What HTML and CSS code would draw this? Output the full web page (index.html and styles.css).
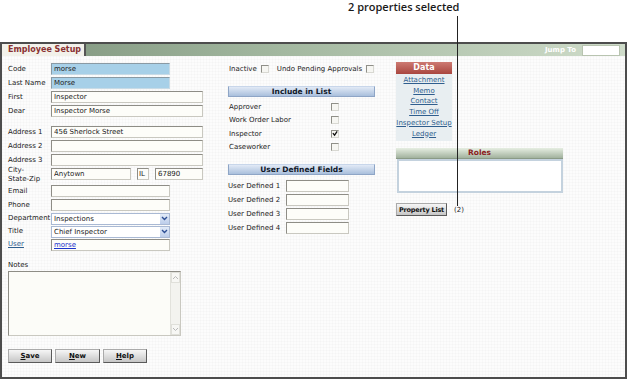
FILE: index.html
```html
<!DOCTYPE html>
<html lang="en">
<head>
  <meta charset="UTF-8" />
  <title>Employee Setup</title>
  <link rel="stylesheet" href="styles.css">
</head>
<body>
  <!-- Callout above the screen -->
  <div class="callout">
    <span class="callout-text">2 properties selected</span>
    <span class="callout-line"></span>
  </div>

  <div class="frame">
    <!-- Title bar -->
    <div class="titlebar">
      <div class="tab">Employee Setup</div>
      <div class="jump">
        <span>Jump To</span>
        <input type="text" class="jump-input">
      </div>
    </div>

    <div class="content">
      <!-- Left column -->
      <div class="col-left">
        <div class="row"><span class="lbl">Code</span><input class="fld short hl" value="morse"></div>
        <div class="row"><span class="lbl">Last Name</span><input class="fld short hl" value="Morse"></div>
        <div class="row"><span class="lbl">First</span><input class="fld long" value="Inspector"></div>
        <div class="row"><span class="lbl">Dear</span><input class="fld long" value="Inspector Morse"></div>

        <div class="row gap-top"><span class="lbl">Address 1</span><input class="fld long" value="456 Sherlock Street"></div>
        <div class="row"><span class="lbl">Address 2</span><input class="fld long" value=""></div>
        <div class="row"><span class="lbl">Address 3</span><input class="fld long" value=""></div>
        <div class="row city-row">
          <span class="lbl two-line">City-<br>State-Zip</span>
          <input class="fld city" value="Anytown">
          <input class="fld state" value="IL">
          <input class="fld zip" value="67890">
        </div>
        <div class="row"><span class="lbl">Email</span><input class="fld short" value=""></div>
        <div class="row"><span class="lbl">Phone</span><input class="fld short" value=""></div>
        <div class="row tight"><span class="lbl">Department</span>
          <div class="select"><span>Inspections</span><span class="arrow"><svg width="7" height="5" viewBox="0 0 7 5"><polyline points="1,1 3.5,3.5 6,1" fill="none" stroke="#2d4f94" stroke-width="1.4"/></svg></span></div>
        </div>
        <div class="row tight"><span class="lbl">Title</span>
          <div class="select"><span>Chief Inspector</span><span class="arrow"><svg width="7" height="5" viewBox="0 0 7 5"><polyline points="1,1 3.5,3.5 6,1" fill="none" stroke="#2d4f94" stroke-width="1.4"/></svg></span></div>
        </div>
        <div class="row tight"><a class="lbl link" href="#">User</a>
          <div class="fld short userbox"><a href="#">morse</a></div>
        </div>

        <div class="notes-lbl">Notes</div>
        <div class="notes">
          <div class="scroll">
            <span class="sbtn"><svg width="7" height="5" viewBox="0 0 7 5"><polyline points="1,4 3.5,1.5 6,4" fill="none" stroke="#b8b8b8" stroke-width="1"/></svg></span>
            <span class="sbtn"><svg width="7" height="5" viewBox="0 0 7 5"><polyline points="1,1 3.5,3.5 6,1" fill="none" stroke="#b8b8b8" stroke-width="1"/></svg></span>
          </div>
        </div>

        <div class="buttons">
          <button class="btn"><u>S</u>ave</button>
          <button class="btn"><u>N</u>ew</button>
          <button class="btn"><u>H</u>elp</button>
        </div>
      </div>

      <!-- Middle column -->
      <div class="col-mid">
        <div class="row">
          <span class="plain">Inactive</span><span class="chk"></span>
          <span class="plain undo">Undo Pending Approvals</span><span class="chk"></span>
        </div>

        <div class="bar blue first-bar">Include in List</div>
        <div class="list">
          <div class="crow"><span class="clbl">Approver</span><span class="chk"></span></div>
          <div class="crow"><span class="clbl">Work Order Labor</span><span class="chk"></span></div>
          <div class="crow"><span class="clbl">Inspector</span><span class="chk"><svg width="7" height="7" viewBox="0 0 7 7"><polyline points="1,3 3,5.5 6,1" fill="none" stroke="#111" stroke-width="1.5"/></svg></span></div>
          <div class="crow"><span class="clbl">Caseworker</span><span class="chk"></span></div>
        </div>

        <div class="bar blue">User Defined Fields</div>
        <div class="udf">
          <div class="row"><span class="ulbl">User Defined 1</span><input class="fld ufld" value=""></div>
          <div class="row"><span class="ulbl">User Defined 2</span><input class="fld ufld" value=""></div>
          <div class="row"><span class="ulbl">User Defined 3</span><input class="fld ufld" value=""></div>
          <div class="row"><span class="ulbl">User Defined 4</span><input class="fld ufld" value=""></div>
        </div>
      </div>

      <!-- Right column -->
      <div class="col-right">
        <div class="databox">
          <div class="data-head">Data</div>
          <div class="data-links">
            <a href="#">Attachment</a>
            <a href="#">Memo</a>
            <a href="#">Contact</a>
            <a href="#">Time Off</a>
            <a href="#">Inspector Setup</a>
            <a href="#">Ledger</a>
          </div>
        </div>

        <div class="bar green">Roles</div>
        <div class="roles"></div>

        <div class="prop-row">
          <button class="btn prop">Property List</button>
          <span class="count">(2)</span>
        </div>
      </div>
    </div>
  </div>
</body>
</html>
```

FILE: styles.css
```css
/* Global */
body {
  margin: 0;
  background: #fff;
  font-family: "DejaVu Sans", Verdana, sans-serif;
  font-size: 7px;
  color: #222;
  position: relative;
}
a {
  color: #2f5e8e;
}

/* Callout */
.callout {
  height: 42px;
  padding-left: 348px;
  box-sizing: border-box;
}
.callout-text {
  display: inline-block;
  font-family: "Open Sans", sans-serif;
  font-weight: 600;
  font-size: 11px;
  line-height: 14px;
  color: #1a1a1a;
}
.callout-line {
  position: absolute;
  left: 457px;
  top: 16px;
  width: 1px;
  height: 190px;
  background: #222;
  z-index: 10;
}

/* Frame */
.frame {
  width: 627px;
  height: 337px;
  box-sizing: border-box;
  border: 2px solid #4d4d4d;
  background-color: #fcfcfc;
  background-image:
    linear-gradient(90deg, rgba(0,0,0,0.016) 1px, transparent 1px),
    linear-gradient(rgba(0,0,0,0.016) 1px, transparent 1px);
  background-size: 3px 3px;
}
.titlebar {
  height: 12px;
  display: flex;
  justify-content: space-between;
  background: linear-gradient(90deg, #7d937c, #a3b8a0 45%, #cfdcca);
}
.tab {
  width: 84px;
  height: 12px;
  box-sizing: border-box;
  padding-left: 6px;
  background: #f2f1ea;
  border-right: 2px solid #555;
  color: #8a3232;
  font-weight: bold;
  font-size: 8px;
  line-height: 12px;
  white-space: nowrap;
  overflow: hidden;
}
.jump {
  display: flex;
  align-items: center;
  gap: 6px;
  padding-right: 5px;
  color: #fff;
  font-weight: bold;
  font-size: 7px;
}
.jump-input {
  width: 38px;
  height: 11px;
  box-sizing: border-box;
  border: 1px solid #b8c4b0;
  background: #fff;
  padding: 0;
}

/* Content columns */
.content {
  display: flex;
  padding: 6px 0 0 6px;
}
.col-left {
  width: 195px;
  margin-right: 25px;
}
.col-mid {
  width: 147px;
  margin-right: 21px;
}
.col-right {
  width: 167px;
}

/* Rows and fields */
.row {
  display: flex;
  align-items: center;
  height: 14px;
}
.row.tight {
  height: 13px;
}
.row.gap-top {
  margin-top: 7px;
}
.lbl {
  width: 43px;
  flex-shrink: 0;
  white-space: nowrap;
  line-height: 9px;
}
.fld {
  height: 12px;
  box-sizing: border-box;
  border: 1px solid #c9c8c0;
  border-top-color: #8e8d86;
  border-left-color: #8e8d86;
  background: #fdfdf9;
  padding: 0 2px;
  font-family: "DejaVu Sans", Verdana, sans-serif;
  font-size: 7px;
  color: #222;
  margin: 0;
}
.fld.short { width: 119px; }
.fld.long { width: 152px; }
.fld.hl { background: #a7d0e8; border-color: #c8dbe6; border-top-color: #8a9aa4; border-left-color: #8a9aa4; }
.city-row {
  height: 17px;
  align-items: flex-start;
}
.two-line {
  margin-top: -1px;
}
.fld.city { width: 80px; margin-top: 1px; }
.fld.state { width: 12px; margin: 1px 0 0 6px; padding: 0 1px; }
.fld.zip { width: 48px; margin: 1px 0 0 6px; }
.link {
  text-decoration: underline;
}

.select {
  width: 119px;
  height: 12px;
  box-sizing: border-box;
  border: 1px solid #a9b9d4;
  background: #fff;
  display: flex;
  align-items: center;
  justify-content: space-between;
  padding-left: 2px;
  font-size: 7px;
}
.select .arrow {
  width: 9px;
  height: 10px;
  background: linear-gradient(#e2ebf8, #bccdea);
  display: flex;
  align-items: center;
  justify-content: center;
}
.userbox {
  display: flex;
  align-items: center;
  background: #fdfdf9;
}
.userbox a {
  color: #1a33cc;
}

/* Notes */
.notes-lbl {
  margin-top: 10px;
  line-height: 9px;
}
.notes {
  margin-top: 1px;
  width: 173px;
  height: 65px;
  box-sizing: border-box;
  border: 1px solid #c9c8c0;
  border-top-color: #8e8d86;
  border-left-color: #8e8d86;
  background: #fcfcf8;
  display: flex;
  justify-content: flex-end;
}
.scroll {
  width: 9px;
  background: #f3f3ef;
  border-left: 1px solid #e2e2dc;
  display: flex;
  flex-direction: column;
  justify-content: space-between;
}
.sbtn {
  height: 9px;
  display: flex;
  align-items: center;
  justify-content: center;
  background: #f7f7f4;
  border: 1px solid #e0e0da;
}

/* Buttons */
.buttons {
  display: flex;
  gap: 3px;
  margin-top: 13px;
}
.btn {
  width: 44px;
  height: 14px;
  padding: 0;
  border: 1px solid #5a5a5a;
  border-top-color: #aaa;
  border-left-color: #aaa;
  background: linear-gradient(#f6f6f6, #c6c6c6);
  font-family: "DejaVu Sans", Verdana, sans-serif;
  font-weight: bold;
  font-size: 7px;
  color: #111;
  white-space: nowrap;
}
.buttons .btn:nth-child(2) { width: 45px; }

/* Middle column */
.plain {
  margin-left: 1px;
}
.undo {
  margin-left: 8px;
}
.chk {
  width: 8px;
  height: 8px;
  box-sizing: border-box;
  border: 1px solid #d8d8d2;
  border-top-color: #8f8f88;
  border-left-color: #8f8f88;
  background: #f6f6f2;
  margin-left: 4px;
  display: flex;
  align-items: center;
  justify-content: center;
}
.bar {
  height: 11px;
  box-sizing: border-box;
  text-align: center;
  font-weight: bold;
  font-size: 7.5px;
  line-height: 10px;
}
.bar.blue {
  background: linear-gradient(#e2eaf6, #a9bfdc);
  border: 1px solid #8ea5c6;
  border-top-color: #c8d6ea;
  color: #101828;
}
.first-bar {
  margin-top: 10px;
}
.list {
  margin-top: 3px;
  margin-bottom: 10px;
}
.crow {
  display: flex;
  align-items: center;
  height: 13.5px;
}
.clbl {
  width: 98px;
  margin-left: 1px;
}
.udf {
  margin-top: 4px;
}
.ulbl {
  width: 58px;
  flex-shrink: 0;
  white-space: nowrap;
}
.fld.ufld {
  width: 63px;
}

/* Right column */
.databox {
  width: 56px;
}
.data-head {
  height: 12px;
  background: linear-gradient(#cd7a72, #a9463f);
  color: #fff;
  font-weight: bold;
  font-size: 8px;
  line-height: 12px;
  text-align: center;
}
.data-links {
  background: #e8eef1;
  padding: 1px 0 2px;
  display: flex;
  flex-direction: column;
  align-items: center;
  line-height: 10.7px;
}
.bar.green {
  margin-top: 7px;
  background: linear-gradient(#e6eee2, #a2b29e);
  border-bottom: 1px solid #8a9a86;
  color: #8b1c1c;
}
.roles {
  margin-left: 1px;
  height: 34px;
  box-sizing: border-box;
  border: 2px solid #c4d2de;
  background: #fff;
}
.prop-row {
  display: flex;
  align-items: center;
  margin-top: 10px;
}
.btn.prop {
  width: 51px;
  height: 13px;
  font-size: 6.5px;
  letter-spacing: -0.2px;
}
.count {
  margin-left: 7px;
}
```
